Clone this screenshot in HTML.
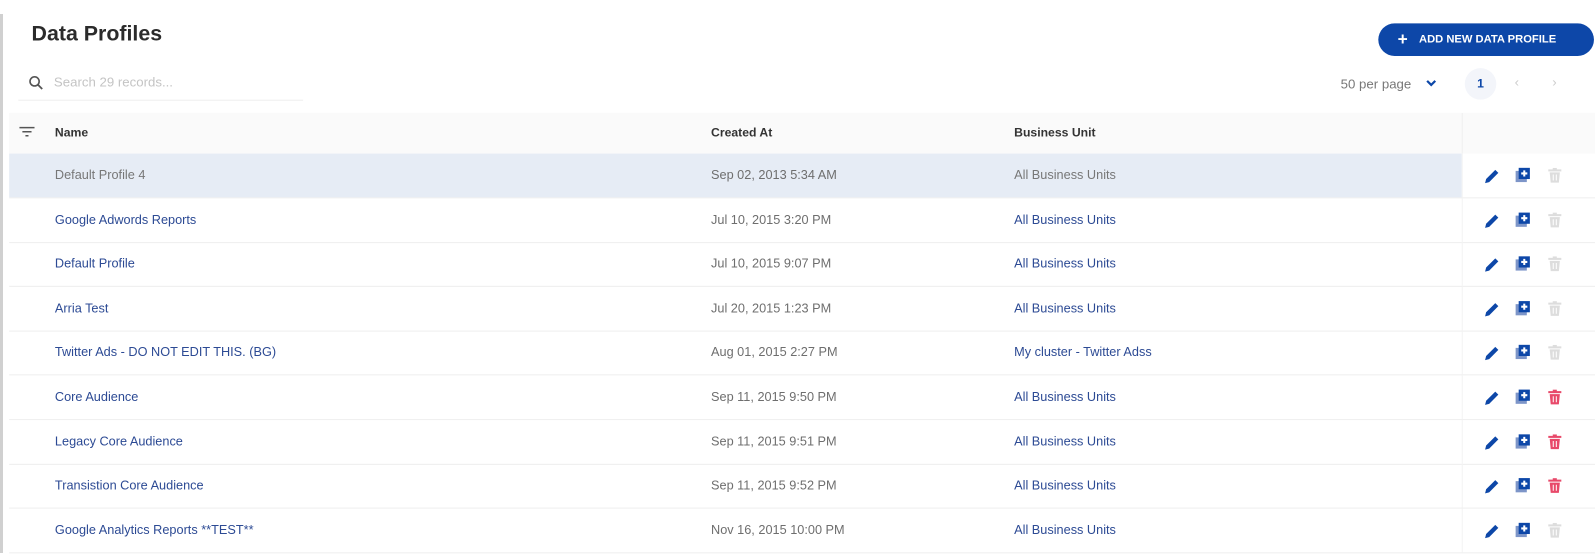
<!DOCTYPE html>
<html><head><style>
body{margin:0;width:1595px;height:553px;background:#fff;font-family:"Liberation Sans",sans-serif;position:relative;overflow:hidden}
#w{position:absolute;left:0;top:0;width:1570px;height:545px;transform:scale(1.0172);transform-origin:0 0}
.lb{position:absolute;left:0;top:14px;width:3px;height:539px;background:#d0d0d0}
h1{position:absolute;left:31px;top:22px;margin:0;font-size:21px;font-weight:bold;color:#2b2b2b}
.btn{position:absolute;left:1355px;top:23px;width:212px;height:32px;border-radius:16px;background:#0d47a8;color:#fff;font-size:11px;font-weight:bold;line-height:32px;text-indent:40px}
.btn:before{content:"+";position:absolute;left:-21px;font-size:17px}
.search{position:absolute;left:18px;top:66px;width:280px;height:32px;border-bottom:1px solid #eee}
.search span{position:absolute;left:35px;top:7px;color:#c4c4c4;font-size:13px}
.pp{position:absolute;left:1318px;top:75px;font-size:13px;color:#777}
.pg{position:absolute;left:1440px;top:67px;width:31px;height:31px;border-radius:50%;background:#f3f5fa;color:#0d47a8;font-size:12px;font-weight:bold;text-align:center;line-height:31px}
.arr{position:absolute;top:73px;color:#ccc;font-size:13px}
.thead{position:absolute;left:9px;top:111px;width:1573px;height:40px;background:#fafafa;font-size:12px;font-weight:bold;color:#333}
.thead div,.row div{position:absolute}
.row{position:absolute;left:9px;width:1573px;height:43px;border-bottom:1px solid #eee;font-size:12.5px;color:#2c4a94}
.row .d{color:#6e6e6e}
.sel{background:#e6ecf5;width:1428px;height:43px;left:0;top:0}
.act{position:absolute;left:1428px;top:0;width:1px;height:43px;background:#f3f3f3}
</style></head><body>
<div class="lb"></div>
<div id="w">
<h1>Data Profiles</h1>
<div class="btn">ADD NEW DATA PROFILE</div>
<div class="search"><svg style="position:absolute;left:10px;top:8px" width="15" height="15" viewBox="0 0 15 15"><circle cx="6" cy="6" r="4.5" fill="none" stroke="#555" stroke-width="1.6"/><line x1="9.3" y1="9.3" x2="13.5" y2="13.5" stroke="#555" stroke-width="1.8"/></svg><span>Search 29 records...</span></div>
<div class="pp">50 per page</div>
<svg style="position:absolute;left:1402px;top:78px" width="10" height="8" viewBox="0 0 10 8"><path d="M1 1.5L5 5.5L9 1.5" fill="none" stroke="#0d47a8" stroke-width="2.2"/></svg>
<div class="pg">1</div>
<div class="arr" style="left:1489px">‹</div><div class="arr" style="left:1526px">›</div>
<div class="thead">
<svg style="position:absolute;left:10px;top:13px" width="15" height="12" viewBox="0 0 15 12"><path d="M0 1.5H15M3 5.5H12M6 9.5H9" stroke="#555" stroke-width="1.5"/></svg>
<div style="left:45px;top:12px">Name</div><div style="left:690px;top:12px">Created At</div><div style="left:988px;top:12px">Business Unit</div>
<div style="left:1428px;top:0;width:1px;height:40px;background:#f0f0f0"></div>
</div>
<div id="rows"></div>
</div>
<script>
var d=[["Default Profile 4","Sep 02, 2013 5:34 AM","All Business Units",0],["Google Adwords Reports","Jul 10, 2015 3:20 PM","All Business Units",0],["Default Profile","Jul 10, 2015 9:07 PM","All Business Units",0],["Arria Test","Jul 20, 2015 1:23 PM","All Business Units",0],["Twitter Ads - DO NOT EDIT THIS. (BG)","Aug 01, 2015 2:27 PM","My cluster - Twitter Adss",0],["Core Audience","Sep 11, 2015 9:50 PM","All Business Units",1],["Legacy Core Audience","Sep 11, 2015 9:51 PM","All Business Units",1],["Transistion Core Audience","Sep 11, 2015 9:52 PM","All Business Units",1],["Google Analytics Reports **TEST**","Nov 16, 2015 10:00 PM","All Business Units",0]];
var h="";d.forEach(function(r,i){var t=151+i*43.6;var c=i==0?"color:#777":"";
var tc=r[3]?"#e8496a":"#ddd";
h+='<div class="row" style="top:'+t+'px">'+(i==0?'<div class="sel"></div>':'')+'<div class="act"></div><div style="left:45px;top:14px;'+c+'">'+r[0]+'</div><div class="d" style="left:690px;top:14px">'+r[1]+'</div><div style="left:988px;top:14px;'+c+'">'+r[2]+'</div>'+
'<svg style="position:absolute;left:1450px;top:14px" width="16" height="16" viewBox="0 0 16 16"><path d="M1 15L2 11L11 2L14 5L5 14Z" fill="#0d47a8"/></svg>'+
'<svg style="position:absolute;left:1480px;top:13px" width="16" height="16" viewBox="0 0 16 16"><rect x="1" y="4" width="11" height="11" fill="#7d95c8"/><rect x="4" y="1" width="11" height="11" fill="#0d47a8"/><path d="M9.5 3.5V9.5M6.5 6.5H12.5" stroke="#fff" stroke-width="2"/></svg>'+
'<svg style="position:absolute;left:1513px;top:14px" width="13" height="15" viewBox="0 0 13 15"><rect x="0" y="1.5" width="13" height="2" fill="'+tc+'"/><rect x="4.5" y="0" width="4" height="2" fill="'+tc+'"/><path d="M1.5 4.5H11.5L10.5 14.5H2.5Z" fill="'+tc+'"/><path d="M5 6.5V12.5M8 6.5V12.5" stroke="#fff" stroke-width="1"/></svg></div>';});
document.getElementById("rows").innerHTML=h;
</script>
</body></html>
